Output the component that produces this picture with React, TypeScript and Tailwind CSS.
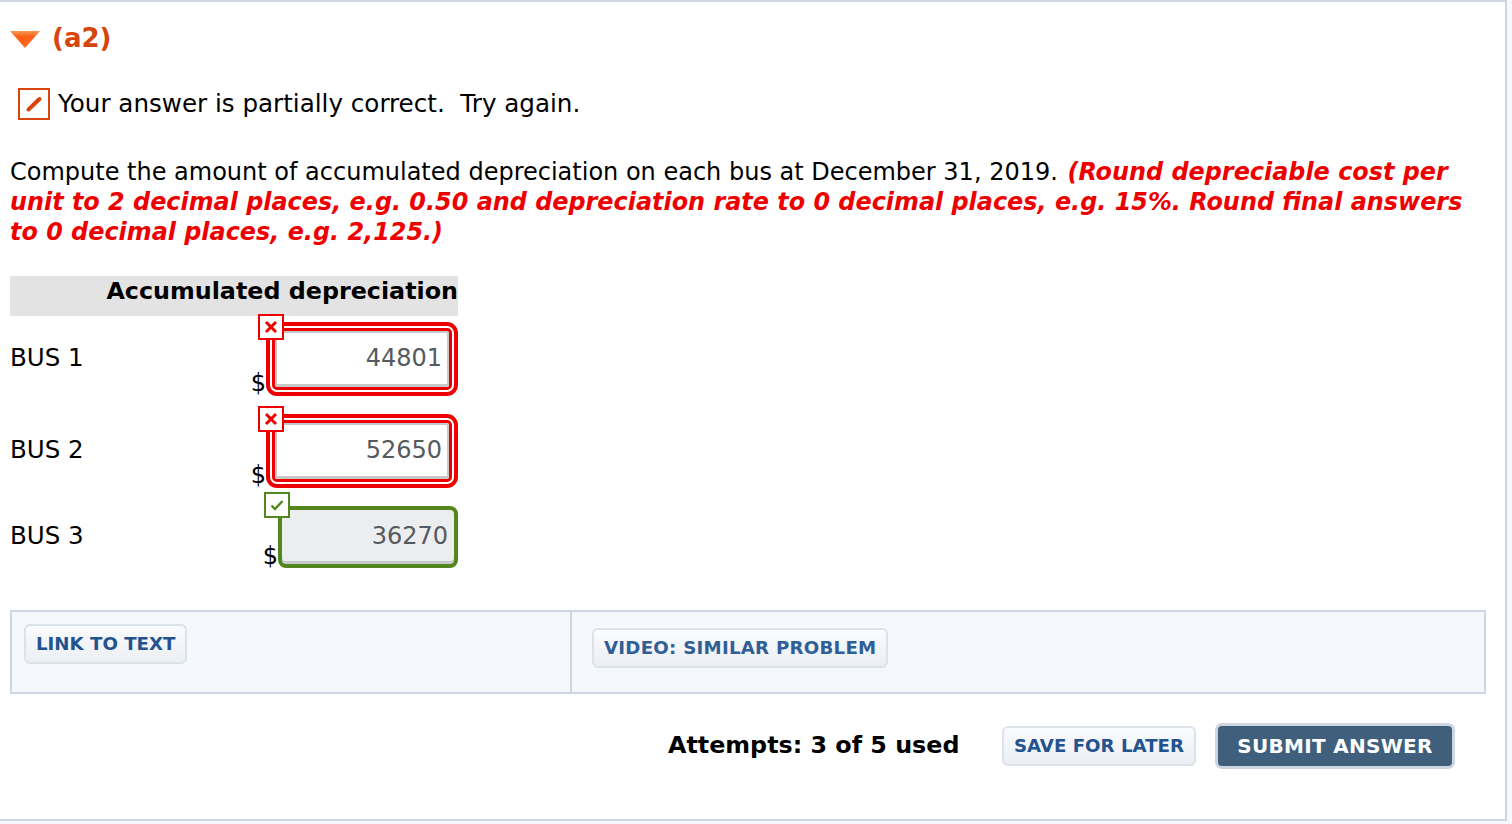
export default function App() {
  const font = '[font-family:"DejaVu_Sans",Verdana,sans-serif]';
  return (
    <div className={`w-[1512px] h-[824px] bg-[#f5f8fc] ${font} text-[24px] leading-[30px] text-black overflow-hidden`}>
      <div className="w-[1507px] h-[821px] bg-white border-t-2 border-r-2 border-b-2 border-[#cdd6e2] pl-[10px] pr-[20px] flex flex-col">
        <div className="flex items-center h-[24px] mt-[24px]">
          <svg width="30" height="18" viewBox="0 0 30 18" className="shrink-0 translate-y-[1px]">
            <defs>
              <linearGradient id="tri" x1="0" y1="0" x2="0" y2="1">
                <stop offset="0" stopColor="#f09a55" />
                <stop offset="0.35" stopColor="#ff5c14" />
                <stop offset="1" stopColor="#ff6a20" />
              </linearGradient>
            </defs>
            <path d="M0 1H30L15 18Z" fill="url(#tri)" />
          </svg>
          <span className="ml-[12px] font-bold text-[#d8450b] text-[26px]">(a2)</span>
        </div>
        <div className="flex items-center mt-[38px] ml-[8px] h-[32px]">
          <span className="w-[32px] h-[32px] border-[2.5px] border-[#d8450b] flex items-center justify-center shrink-0">
            <svg width="18" height="18" viewBox="0 0 18 18">
              <path d="M3.5 14.5L14.5 4" stroke="#d8450b" strokeWidth="4" strokeLinecap="round" />
            </svg>
          </span>
          <span className="ml-[8px] whitespace-pre text-[24.6px]">Your answer is partially correct.  Try again.</span>
        </div>
        <p className="mt-[37px] w-[1480px]">
          Compute the amount of accumulated depreciation on each bus at December 31, 2019.{" "}
          <b className="ml-[2px] italic text-[#ee0000] text-[23.9px]">
            (Round depreciable cost per unit to 2 decimal places, e.g. 0.50 and depreciation rate to 0 decimal places, e.g. 15%. Round final answers to 0 decimal places, e.g. 2,125.)
          </b>
        </p>
        <div className="w-[448px] mt-[29px]">
          <div className="h-[40px] bg-[#e3e3e3] font-bold text-right whitespace-nowrap text-[23.8px] leading-[31px]">Accumulated depreciation</div>
          <Row label="BUS 1" value="44801" />
          <div className="h-[12px]" />
          <Row label="BUS 2" value="52650" />
          <div className="flex h-[62px] mt-[18px] relative">
            <span className="mt-[15px] text-[24.5px]">BUS 3</span>
            <span className="ml-auto mt-[35px]">$</span>
            <div className="w-[180px] h-[62px] border-[4px] border-[#53861c] rounded-[8px] bg-[#ecedef] text-right pr-[6px] pt-[11px] text-[#555a60] shadow-[inset_0_-3px_0_#c6c8cb]">36270</div>
            <span className="absolute left-[254px] -top-[14px] w-[26px] h-[26px] bg-white border-2 border-[#53861c] flex items-center justify-center">
              <svg width="14" height="12" viewBox="0 0 14 12">
                <path d="M1.5 6.5L5 10L12.5 2" fill="none" stroke="#53861c" strokeWidth="2.4" />
              </svg>
            </span>
          </div>
        </div>
        <div className="w-[1476px] h-[84px] mt-[42px] flex border-2 border-[#cdd6e2] bg-[#f5f8fc]">
          <div className="w-[560px] border-r-2 border-[#cdd6e2] pl-[12px] pt-[12px]">
            <Btn>LINK TO TEXT</Btn>
          </div>
          <div className="pl-[20px] pt-[16px]">
            <button className="h-[40px] px-[10px] rounded-[6px] border-2 border-[#dbe2ea] bg-gradient-to-b from-[#fafbfd] to-[#ebeff4] text-[#2f5f96] font-bold text-[18.2px] tracking-[0.25px] leading-[30px] whitespace-nowrap">VIDEO: SIMILAR PROBLEM</button>
          </div>
        </div>
        <div className="flex items-center mt-[29px] w-[1445px]">
          <span className="ml-[658px] font-bold text-[23.8px] -translate-y-[1px]">Attempts: 3 of 5 used</span>
          <div className="ml-auto flex items-center gap-[19px]">
            <Btn>SAVE FOR LATER</Btn>
            <button className="h-[46px] w-[240px] rounded-[7px] bg-[#3f5f7d] border-[3px] border-[#ccd5e0] text-white font-bold text-[20px] tracking-[0.3px]">SUBMIT ANSWER</button>
          </div>
        </div>
      </div>
    </div>
  );
}

function Btn({ children }: { children: string }) {
  return (
    <button className="h-[40px] px-[10px] rounded-[6px] border-2 border-[#dbe2ea] bg-gradient-to-b from-[#fafbfd] to-[#ebeff4] text-[#23538f] font-bold text-[18.2px] leading-[30px] whitespace-nowrap">
      {children}
    </button>
  );
}

function Row({ label, value }: { label: string; value: string }) {
  return (
    <div className="flex h-[74px] mt-[6px] relative">
      <span className="mt-[21px] text-[24.5px]">{label}</span>
      <span className="ml-auto mt-[46px]">$</span>
      <div className="w-[192px] h-[74px] border-[4px] border-[#ee0000] rounded-[11px] bg-white p-[2px]">
        <div className="h-full border-[3px] border-[#ee0000] rounded-[5px] bg-white">
          <div className="h-full border-[2px] border-[#c8c8c8] border-b-[3px] rounded-[3px] text-right pr-[5px] pt-[10px] text-[#555a60]">{value}</div>
        </div>
      </div>
      <span className="absolute left-[248px] -top-[8px] w-[26px] h-[26px] bg-white border-2 border-[#ee0000] flex items-center justify-center">
        <svg width="14" height="14" viewBox="0 0 14 14">
          <path d="M2 2L12 12M12 2L2 12" stroke="#ee0000" strokeWidth="3" />
        </svg>
      </span>
    </div>
  );
}
